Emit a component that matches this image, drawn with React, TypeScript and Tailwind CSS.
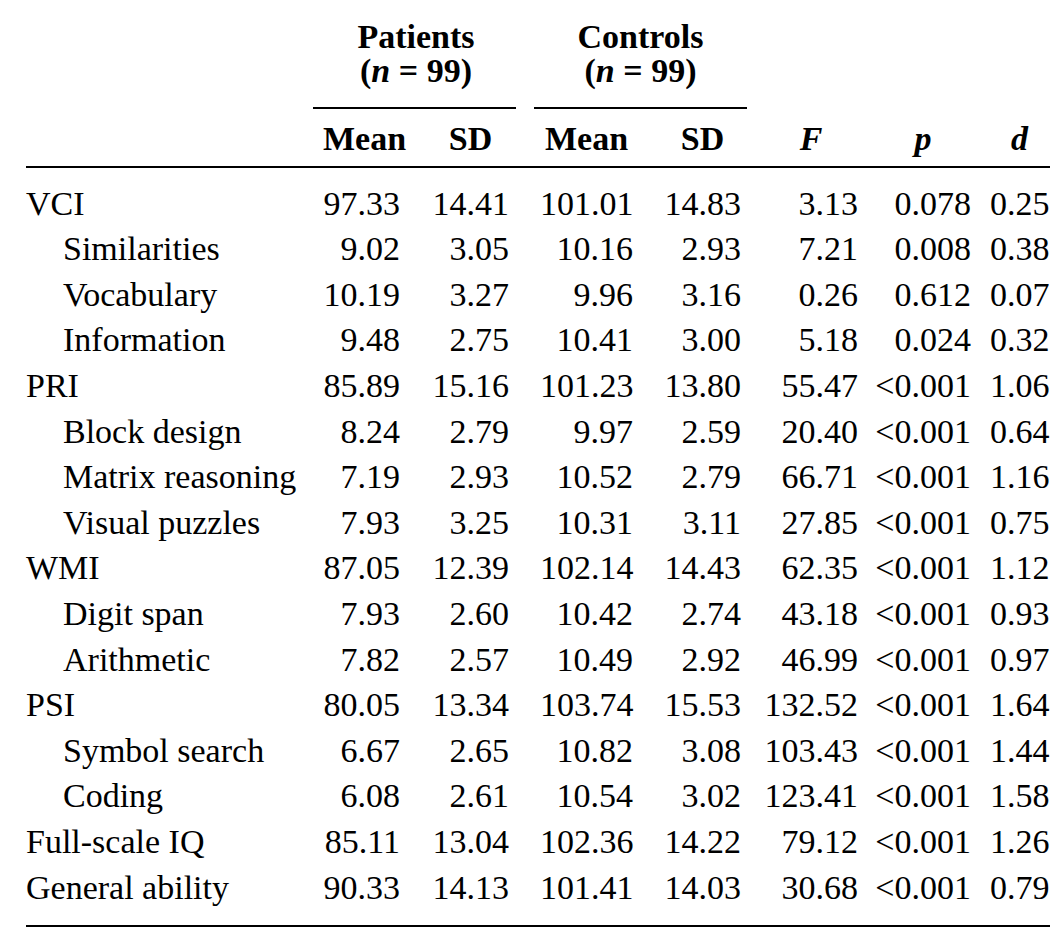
import React from 'react';

interface Row {
  label: string;
  sub?: boolean;
  values: string[];
}

const rows: Row[] = [
  { label: 'VCI', values: ['97.33', '14.41', '101.01', '14.83', '3.13', '0.078', '0.25'] },
  { label: 'Similarities', sub: true, values: ['9.02', '3.05', '10.16', '2.93', '7.21', '0.008', '0.38'] },
  { label: 'Vocabulary', sub: true, values: ['10.19', '3.27', '9.96', '3.16', '0.26', '0.612', '0.07'] },
  { label: 'Information', sub: true, values: ['9.48', '2.75', '10.41', '3.00', '5.18', '0.024', '0.32'] },
  { label: 'PRI', values: ['85.89', '15.16', '101.23', '13.80', '55.47', '<0.001', '1.06'] },
  { label: 'Block design', sub: true, values: ['8.24', '2.79', '9.97', '2.59', '20.40', '<0.001', '0.64'] },
  { label: 'Matrix reasoning', sub: true, values: ['7.19', '2.93', '10.52', '2.79', '66.71', '<0.001', '1.16'] },
  { label: 'Visual puzzles', sub: true, values: ['7.93', '3.25', '10.31', '3.11', '27.85', '<0.001', '0.75'] },
  { label: 'WMI', values: ['87.05', '12.39', '102.14', '14.43', '62.35', '<0.001', '1.12'] },
  { label: 'Digit span', sub: true, values: ['7.93', '2.60', '10.42', '2.74', '43.18', '<0.001', '0.93'] },
  { label: 'Arithmetic', sub: true, values: ['7.82', '2.57', '10.49', '2.92', '46.99', '<0.001', '0.97'] },
  { label: 'PSI', values: ['80.05', '13.34', '103.74', '15.53', '132.52', '<0.001', '1.64'] },
  { label: 'Symbol search', sub: true, values: ['6.67', '2.65', '10.82', '3.08', '103.43', '<0.001', '1.44'] },
  { label: 'Coding', sub: true, values: ['6.08', '2.61', '10.54', '3.02', '123.41', '<0.001', '1.58'] },
  { label: 'Full-scale IQ', values: ['85.11', '13.04', '102.36', '14.22', '79.12', '<0.001', '1.26'] },
  { label: 'General ability', values: ['90.33', '14.13', '101.41', '14.03', '30.68', '<0.001', '0.79'] },
];

// left gap for each value column (data is right aligned, headers centred over the data)
const pads = ['', 'pl-[32px]', 'pl-[31px]', 'pl-[31px]', 'pl-[23px]', 'pl-[17px]', 'pl-[19px]'];

const grid = 'grid grid-cols-[297px_77px_109px_124px_108px_117px_113px_78px]';

export default function App() {
  return (
    <div className="min-h-screen bg-white pl-[26px] pt-[19.5px] text-[34px] text-black font-['Liberation_Serif','Times_New_Roman',serif]">
      <div className="w-[1024px]">
        {/* group headings */}
        <div className={`${grid} font-bold leading-[34px]`}>
          <div />
          <div className="col-span-2 flex flex-col items-stretch text-center">
            <span>Patients</span>
            <span>
              (<i>n</i> = 99)
            </span>
            <div className="mt-[19.5px] -ml-[10px] -mr-[7px] h-[2px] bg-black" />
          </div>
          <div className="col-span-2 flex flex-col items-stretch pl-[31px] text-center">
            <span>Controls</span>
            <span>
              (<i>n</i> = 99)
            </span>
            <div className="mt-[19.5px] -ml-[6px] -mr-[6px] h-[2px] bg-black" />
          </div>
        </div>

        {/* column headings */}
        <div className={`${grid} mt-[6.7px] font-bold leading-[45.6px]`}>
          <div />
          <div className="text-center">Mean</div>
          <div className="pl-[32px] text-center">SD</div>
          <div className="pl-[31px] text-center">Mean</div>
          <div className="pl-[31px] text-center">SD</div>
          <div className="pl-[23px] text-center italic">F</div>
          <div className="pl-[17px] text-center italic">p</div>
          <div className="pl-[19px] text-center italic">d</div>
        </div>

        <div className="mt-[4.7px] h-[2px] bg-black" />

        <div className="mt-[12.7px]">
          {rows.map((r) => (
            <div key={r.label} className={`${grid} leading-[45.6px]`}>
              <div className={`whitespace-nowrap ${r.sub ? 'pl-[37px]' : ''}`}>{r.label}</div>
              {r.values.map((v, i) => (
                <div key={i} className={`whitespace-nowrap text-right ${pads[i]}`}>
                  {v}
                </div>
              ))}
            </div>
          ))}
        </div>

        <div className="mt-[14.7px] h-[2px] bg-black" />
      </div>
    </div>
  );
}
